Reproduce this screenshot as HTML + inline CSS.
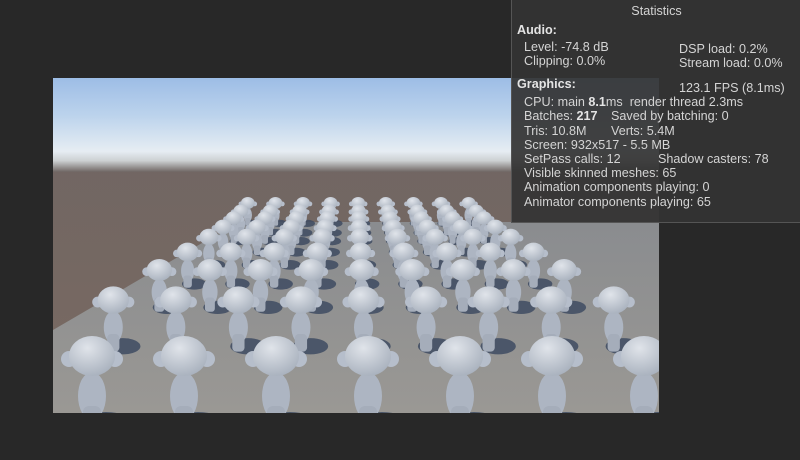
<!DOCTYPE html>
<html><head><meta charset="utf-8"><style>
body{margin:0;width:800px;height:460px;background:#282828;overflow:hidden;position:relative;font-family:"Liberation Sans",sans-serif}
#game{position:absolute;left:53px;top:78px;width:606px;height:335px;overflow:hidden}
#stats{position:absolute;left:511px;top:0;width:289px;height:222px;background:rgba(52,52,52,0.93);border-left:1px solid #555;border-bottom:1px solid #555;color:#d4d4d4;font-size:12.6px}
#stats div{position:absolute;white-space:nowrap}
b{font-weight:bold;color:#e4e4e4}
</style></head><body>
<div id="game"><svg id="sv" width="606" height="335" viewBox="53 78 606 335">
<defs>
<linearGradient id="sky" x1="0" y1="0" x2="0" y2="1">
<stop offset="0" stop-color="#9dbde6"/><stop offset="0.4" stop-color="#bcd3ec"/><stop offset="0.78" stop-color="#e6edf3"/><stop offset="0.88" stop-color="#ccd0d2"/><stop offset="1" stop-color="#6f6663"/></linearGradient>
<linearGradient id="gnd" x1="0" y1="0" x2="0" y2="1"><stop offset="0" stop-color="#6e6563"/><stop offset="1" stop-color="#7a6a62"/></linearGradient>
<linearGradient id="pl" x1="0" y1="0" x2="0" y2="1"><stop offset="0" stop-color="#8a8c8f"/><stop offset="1" stop-color="#9a9894"/></linearGradient>
<radialGradient id="hd" cx="0.4" cy="0.3" r="0.8"><stop offset="0" stop-color="#e0e4ea"/><stop offset="1" stop-color="#a3acb9"/></radialGradient>
</defs>
<rect x="53" y="78" width="606" height="335" fill="url(#gnd)"/>
<rect x="53" y="78" width="606" height="94" fill="url(#sky)"/>
<polygon points="53,330 238,222 659,222 659,413 53,413" fill="url(#pl)"/>
<g id="ch"></g>
</svg></div>
<div id="stats">
<div style="left:0;width:289px;text-align:center;top:4px">Statistics</div>
<div style="left:5px;top:23px"><b>Audio:</b></div>
<div style="left:12px;top:40px">Level: -74.8 dB</div>
<div style="left:12px;top:54px">Clipping: 0.0%</div>
<div style="left:167px;top:42px">DSP load: 0.2%</div>
<div style="left:167px;top:56px">Stream load: 0.0%</div>
<div style="left:5px;top:77px"><b>Graphics:</b></div>
<div style="left:167px;top:81px">123.1 FPS (8.1ms)</div>
<div style="left:12px;top:95px">CPU: main <b>8.1</b>ms&nbsp; render thread 2.3ms</div>
<div style="left:12px;top:109px">Batches: <b>217</b></div>
<div style="left:99px;top:109px">Saved by batching: 0</div>
<div style="left:12px;top:124px">Tris: 10.8M</div>
<div style="left:99px;top:124px">Verts: 5.4M</div>
<div style="left:12px;top:138px">Screen: 932x517 - 5.5 MB</div>
<div style="left:12px;top:152px">SetPass calls: 12</div>
<div style="left:146px;top:152px">Shadow casters: 78</div>
<div style="left:12px;top:166px">Visible skinned meshes: 65</div>
<div style="left:12px;top:180px">Animation components playing: 0</div>
<div style="left:12px;top:195px">Animator components playing: 65</div>
</div>
<script>
var rows=[[203,.3],[211,.32],[218,.34],[227,.37],[237,.41],[252,.47],[270,.55],[300,.68],[356,1]];
var g=document.getElementById('ch'),h='';
rows.forEach(function(r){var y=r[0],s=r[1],c=354+14*s;
for(var j=-4;j<=4;j++){var x=c+j*92*s;var R=23*s;
h+='<ellipse cx="'+(x+14*s)+'" cy="'+(y+68*s)+'" rx="'+(26*s)+'" ry="'+(12*s)+'" fill="#3e4b62" opacity="0.85"/>';
h+='<ellipse cx="'+x+'" cy="'+(y+40*s)+'" rx="'+(14*s)+'" ry="'+(24*s)+'" fill="#adb5c2"/>';
h+='<rect x="'+(x-9*s)+'" y="'+(y+50*s)+'" width="'+(18*s)+'" height="'+(26*s)+'" rx="'+(6*s)+'" fill="#a5adba"/>';
h+='<circle cx="'+(x-R)+'" cy="'+(y+3*s)+'" r="'+(8*s)+'" fill="#b6becb"/><circle cx="'+(x+R)+'" cy="'+(y+3*s)+'" r="'+(8*s)+'" fill="#b6becb"/>';
h+='<ellipse cx="'+x+'" cy="'+y+'" rx="'+R+'" ry="'+(20*s)+'" fill="url(#hd)"/>';}});
g.innerHTML=h;
</script>
</body></html>
